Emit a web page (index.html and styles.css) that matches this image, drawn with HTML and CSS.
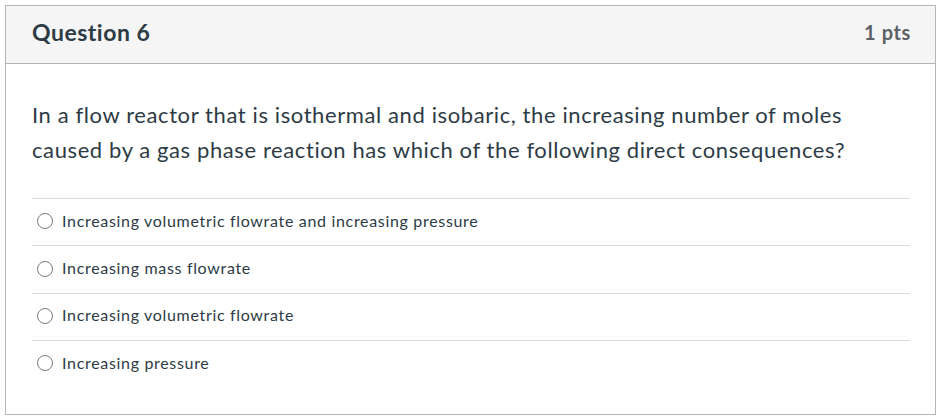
FILE: index.html
```html
<!DOCTYPE html>
<html>
<head>
<meta charset="utf-8">
<link rel="stylesheet" href="styles.css">
</head>
<body>
<div class="question">
  <div class="q-header">
    <h2 class="q-title">Question 6</h2>
    <span class="q-points">1 pts</span>
  </div>
  <div class="q-body">
    <p class="q-text">In a flow reactor that is isothermal and isobaric, the increasing number of moles caused by a gas phase reaction has which of the following direct consequences?</p>
    <div class="answers">
      <label class="answer"><span class="radio"></span><span class="a-text">Increasing volumetric flowrate and increasing pressure</span></label>
      <label class="answer"><span class="radio"></span><span class="a-text">Increasing mass flowrate</span></label>
      <label class="answer"><span class="radio"></span><span class="a-text">Increasing volumetric flowrate</span></label>
      <label class="answer"><span class="radio"></span><span class="a-text">Increasing pressure</span></label>
    </div>
  </div>
</div>
</body>
</html>
```

FILE: styles.css
```css
html, body {
  margin: 0;
  background: #ffffff;
}
body {
  padding: 5px 5px 6px 5px;
  font-family: Lato, "Noto Sans", sans-serif;
  color: #2d3b45;
}
.question {
  border: 1px solid #b5b5b5;
  background: #ffffff;
}
.q-header {
  display: flex;
  align-items: center;
  justify-content: space-between;
  box-sizing: border-box;
  height: 58px;
  padding: 0 24px 6px 26px;
  background: #f5f5f5;
  border-bottom: 1px solid #b5b5b5;
}
.q-title {
  margin: 0;
  font-size: 23px;
  letter-spacing: 0.5px;
  font-weight: 700;
  color: #2d3b45;
}
.q-points {
  font-size: 20px;
  letter-spacing: 0.6px;
  font-weight: 700;
  color: #5b6167;
}
.q-body {
  padding: 33px 25px 26px 26px;
}
.q-text {
  margin: 0 0 31px 0;
  font-size: 22px;
  letter-spacing: 0.6px;
  line-height: 35px;
  color: #2d3b45;
}
.answers {
  display: flex;
  flex-direction: column;
}
.answer {
  display: flex;
  align-items: center;
  box-sizing: border-box;
  height: 47.4px;
  padding-bottom: 4px;
  border-top: 1px solid #dcdcdc;
  font-size: 16px;
  letter-spacing: 0.68px;
  color: #2d3b45;
}
.radio {
  width: 14px;
  height: 14px;
  border: 1px solid #7a7a7a;
  border-radius: 50%;
  margin: 2px 9px 0 5px;
  background: #fff;
  flex: none;
}
```
